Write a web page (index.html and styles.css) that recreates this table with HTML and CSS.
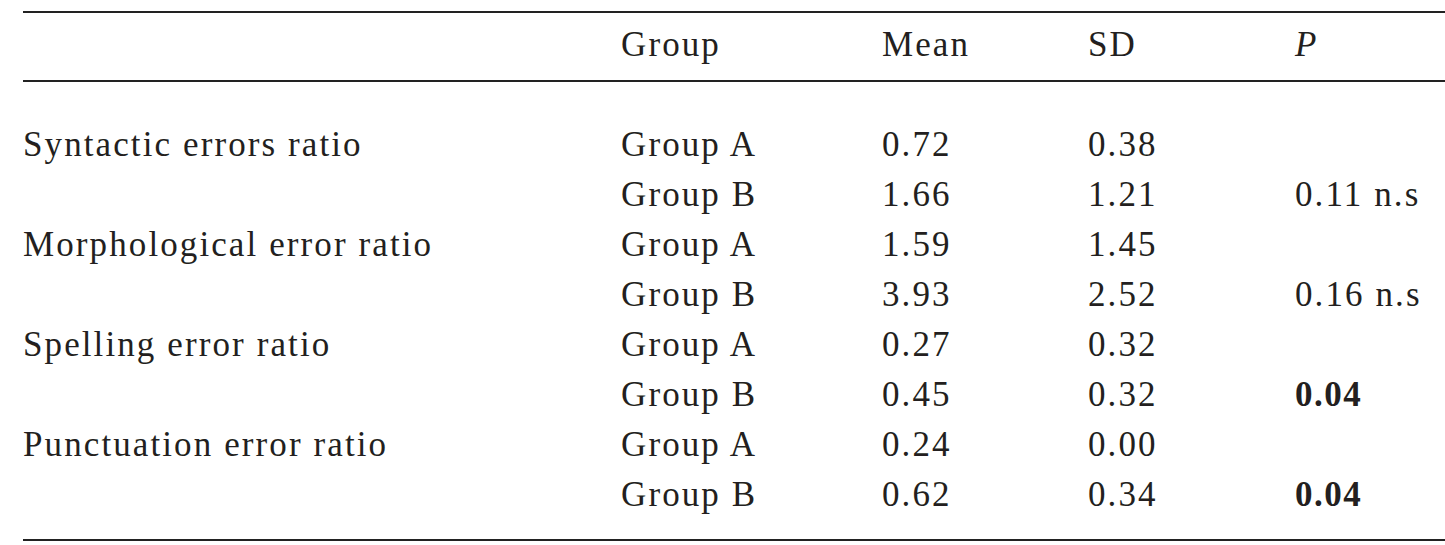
FILE: index.html
```html
<!DOCTYPE html>
<html>
<head>
<meta charset="utf-8">
<link rel="stylesheet" href="styles.css">
</head>
<body>
<div class="table">
  <div class="row head">
    <div class="c"></div><div class="c">Group</div><div class="c">Mean</div><div class="c">SD</div><div class="c"><i>P</i></div>
  </div>
  <div class="body">
    <div class="row"><div class="c">Syntactic errors ratio</div><div class="c">Group A</div><div class="c">0.72</div><div class="c">0.38</div><div class="c"></div></div>
    <div class="row"><div class="c"></div><div class="c">Group B</div><div class="c">1.66</div><div class="c">1.21</div><div class="c">0.11 n.s</div></div>
    <div class="row"><div class="c">Morphological error ratio</div><div class="c">Group A</div><div class="c">1.59</div><div class="c">1.45</div><div class="c"></div></div>
    <div class="row"><div class="c"></div><div class="c">Group B</div><div class="c">3.93</div><div class="c">2.52</div><div class="c">0.16 n.s</div></div>
    <div class="row"><div class="c">Spelling error ratio</div><div class="c">Group A</div><div class="c">0.27</div><div class="c">0.32</div><div class="c"></div></div>
    <div class="row"><div class="c"></div><div class="c">Group B</div><div class="c">0.45</div><div class="c">0.32</div><div class="c"><b>0.04</b></div></div>
    <div class="row"><div class="c">Punctuation error ratio</div><div class="c">Group A</div><div class="c">0.24</div><div class="c">0.00</div><div class="c"></div></div>
    <div class="row"><div class="c"></div><div class="c">Group B</div><div class="c">0.62</div><div class="c">0.34</div><div class="c"><b>0.04</b></div></div>
  </div>
</div>
</body>
</html>
```

FILE: styles.css
```css
html, body {
  margin: 0;
  padding: 0;
  background: #ffffff;
}
body {
  font-family: "Liberation Serif", "DejaVu Serif", serif;
  color: #231f20;
  font-size: 35px;
  line-height: 50px;
  letter-spacing: 2.1px;
}
.table {
  margin-top: 11px;
  margin-left: 23px;
  border-top: 2px solid #222;
  border-bottom: 2px solid #222;
}
.row {
  display: grid;
  grid-template-columns: 598px 261px 206px 207px 1fr;
  white-space: nowrap;
}
.head {
  padding-top: 7px;
  padding-bottom: 10px;
  border-bottom: 2px solid #222;
}
.body {
  padding-top: 38px;
  padding-bottom: 19px;
}
b {
  font-weight: bold;
  letter-spacing: 1.5px;
}
i {
  font-style: italic;
}
```
